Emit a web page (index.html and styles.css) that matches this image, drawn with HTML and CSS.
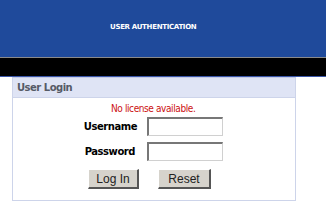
FILE: index.html
```html
<!DOCTYPE html>
<html>
<head>
<meta charset="utf-8">
<link rel="stylesheet" href="styles.css">
</head>
<body>
<div class="banner"><span class="banner-title">USER AUTHENTICATION</span></div>
<div class="band"></div>
<div class="panel">
  <div class="panel-head">User Login</div>
  <div class="panel-body">
    <div class="msg">No license available.</div>
    <div class="form">
      <label class="lbl">Username</label><input class="field" type="text">
      <label class="lbl lbl-pw">Password</label><input class="field" type="password">
    </div>
    <div class="buttons">
      <button class="btn btn-login">Log In</button>
      <button class="btn btn-reset">Reset</button>
    </div>
  </div>
</div>
</body>
</html>
```
FILE: styles.css
```css
html, body {
  margin: 0;
  padding: 0;
  background: #ffffff;
  font-family: "DejaVu Sans", Verdana, sans-serif;
}
.banner {
  height: 57px;
  background: #1f4a9b;
  display: flex;
  align-items: center;
  padding-left: 110px;
  box-sizing: border-box;
}
.banner-title {
  color: #ffffff;
  font-size: 7px;
  font-weight: bold;
  letter-spacing: -0.3px;
  margin-top: -4px;
}
.band {
  height: 18px;
  background: #000000;
  border-top: 1px solid #8a8a8a;
  border-bottom: 1px solid #3a56a8;
}
.panel {
  margin-left: 12px;
  width: 284px;
  box-sizing: border-box;
  border: 1px solid #cdd4ea;
  border-top: 1px solid #c4cbe6;
}
.panel-head {
  height: 19px;
  background: #dfe4f5;
  border-bottom: 1px solid #cdd4ea;
  color: #555a66;
  font-size: 10px;
  font-weight: bold;
  letter-spacing: -0.5px;
  display: flex;
  align-items: center;
  padding-left: 4px;
}
.panel-body {
  padding: 5px 0 11px;
  display: flex;
  flex-direction: column;
  align-items: stretch;
}
.msg {
  color: #cc1111;
  font-family: "DejaVu Sans Condensed", "DejaVu Sans", sans-serif;
  font-size: 10px;
  line-height: 12px;
  letter-spacing: -0.4px;
  padding-left: 98px;
}
.form {
  display: grid;
  grid-template-columns: 124px 76px;
  column-gap: 10px;
  row-gap: 6px;
  margin-top: 2px;
  align-items: center;
}
.lbl {
  font-size: 10px;
  font-weight: bold;
  letter-spacing: -0.45px;
  color: #000;
  text-align: right;
}
.lbl-pw {
  padding-right: 2px;
}
.field {
  width: 76px;
  height: 19px;
  box-sizing: border-box;
  border: 1px solid #d0d0d0;
  border-top: 2px solid #777777;
  border-left: 2px solid #777777;
  margin: 0;
  padding: 0;
  background: #fff;
}
.buttons {
  display: flex;
  gap: 19px;
  padding-left: 75px;
  margin-top: 8px;
}
.btn {
  height: 20px;
  box-sizing: border-box;
  background: #d6d3cc;
  border: 1px solid #ffffff;
  border-right: 2px solid #555555;
  border-bottom: 2px solid #555555;
  font-family: "Liberation Sans", Arial, sans-serif;
  font-size: 12px;
  color: #222;
  padding: 0;
  margin: 0;
}
.btn-login { width: 51px; }
.btn-reset { width: 53px; }
```
